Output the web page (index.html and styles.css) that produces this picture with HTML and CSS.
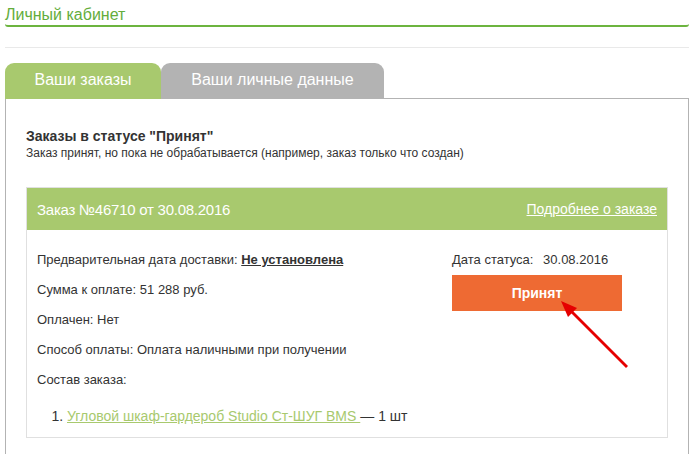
FILE: index.html
```html
<!DOCTYPE html>
<html lang="ru">
<head>
<meta charset="utf-8">
<title>Личный кабинет</title>
<link rel="stylesheet" href="styles.css">
</head>
<body>
<div class="page">
  <h1 class="page-title">Личный кабинет</h1>
  <div class="divider"></div>
  <div class="tabs">
    <div class="tab tab-active">Ваши заказы</div>
    <div class="tab tab-inactive">Ваши личные данные</div>
  </div>
  <div class="panel">
    <h2 class="status-title">Заказы в статусе "Принят"</h2>
    <p class="status-desc">Заказ принят, но пока не обрабатывается (например, заказ только что создан)</p>
    <div class="order">
      <div class="order-head">
        <span class="order-num">Заказ №46710 от 30.08.2016</span>
        <a class="order-more" href="#">Подробнее о заказе</a>
      </div>
      <div class="order-body">
        <div class="order-info">
          <div class="row">Предварительная дата доставки: <b class="undef">Не установлена</b></div>
          <div class="row">Сумма к оплате: 51 288 руб.</div>
          <div class="row">Оплачен: Нет</div>
          <div class="row">Способ оплаты: Оплата наличными при получении</div>
          <div class="row">Состав заказа:</div>
          <ol class="items">
            <li><a class="item-link" href="#">Угловой шкаф-гардероб Studio Ст-ШУГ BMS </a> — 1 шт</li>
          </ol>
        </div>
        <div class="order-status">
          <div class="row">Дата статуса: <span class="status-date">30.08.2016</span></div>
          <div class="status-btn">Принят</div>
        </div>
      </div>
    </div>
  </div>
  <svg class="arrow" width="90" height="90" viewBox="0 0 90 90">
    <polygon points="20.5,18.5 78,76 76,78 18.5,20.5" fill="#e50000"/>
    <polygon points="11,11 27,18 18,27" fill="#e50000"/>
  </svg>
</div>
</body>
</html>
```
FILE: styles.css
```css
* { box-sizing: border-box; }
html, body { margin: 0; padding: 0; background: #fff; }
body {
  font-family: "Liberation Sans", Arial, sans-serif;
  color: #333;
  font-size: 13px;
}
.page {
  position: relative;
  padding: 0 8px 0 5px;
  width: 697px;
  height: 454px;
  overflow: hidden;
}
.page-title {
  margin: 0;
  padding-top: 5px;
  font-size: 16px;
  font-weight: normal;
  line-height: 20px;
  color: #64ad3c;
  border-bottom: 2px solid #6cb43f;
  border-radius: 0 0 3px 3px;
}
.divider {
  margin-top: 20px;
  height: 1px;
  background: #e9e9e9;
}
.tabs {
  display: flex;
  margin-top: 15px;
  margin-bottom: -1px;
  position: relative;
  z-index: 1;
}
.tab {
  height: 36px;
  line-height: 34px;
  font-size: 16px;
  color: #fff;
  text-align: center;
  border-radius: 9px 9px 0 0;
}
.tab-active { width: 156px; background: #a8c96e; }
.tab-inactive { width: 223px; background: #b3b3b3; }
.panel {
  border: 1px solid #b3b3b3;
  padding: 28px 20px 40px 20px;
}
.status-title {
  margin: 0;
  font-size: 14px;
  line-height: 18px;
  font-weight: bold;
  color: #333;
}
.status-desc {
  margin: 0;
  font-size: 12px;
  line-height: 16px;
}
.order {
  margin-top: 26px;
  border: 1px solid #e0e0e0;
}
.order-head {
  display: flex;
  justify-content: space-between;
  align-items: center;
  height: 42px;
  padding: 0 10px;
  background: #a8c96e;
  color: #fff;
}
.order-num { font-size: 15px; letter-spacing: -0.25px; }
.order-more { font-size: 14px; color: #fff; text-decoration: underline; }
.order-body {
  display: flex;
  padding: 15px 10px 6px 10px;
}
.order-info { flex: 1; }
.row { line-height: 30px; font-size: 13px; }
.undef { font-weight: bold; text-decoration: underline; color: #333; }
.items {
  margin: 6px 0 0 0;
  padding-left: 30px;
  line-height: 30px;
  font-size: 14px;
}
.item-link { color: #a8c96e; text-decoration: underline; }
.order-status {
  width: 170px;
  margin-right: 35px;
}
.status-date { margin-left: 6px; }
.status-btn {
  height: 36px;
  line-height: 36px;
  background: #ee6a33;
  color: #fff;
  font-weight: bold;
  font-size: 14px;
  text-align: center;
}
.arrow {
  position: absolute;
  left: 550px;
  top: 290px;
}
```
